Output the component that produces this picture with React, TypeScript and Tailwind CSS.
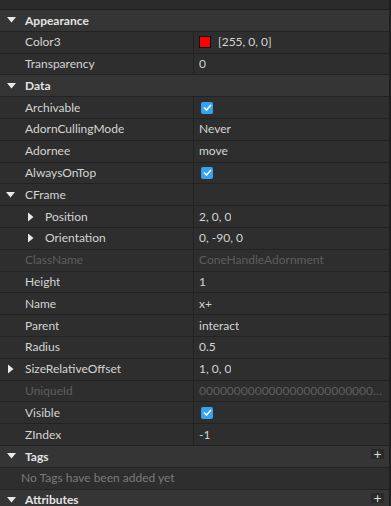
import React from 'react';

type Prop = {
  label: string;
  value?: string;
  kind?: 'text' | 'check' | 'color';
  dim?: boolean;
  indent?: boolean;
  expand?: 'open' | 'closed';
};

type Section = { title: string; props?: Prop[]; add?: boolean; empty?: string };

const sections: Section[] = [
  {
    title: 'Appearance',
    props: [
      { label: 'Color3', value: '[255, 0, 0]', kind: 'color' },
      { label: 'Transparency', value: '0' },
    ],
  },
  {
    title: 'Data',
    props: [
      { label: 'Archivable', kind: 'check' },
      { label: 'AdornCullingMode', value: 'Never' },
      { label: 'Adornee', value: 'move' },
      { label: 'AlwaysOnTop', kind: 'check' },
      { label: 'CFrame', value: '', expand: 'open' },
      { label: 'Position', value: '2, 0, 0', indent: true, expand: 'closed' },
      { label: 'Orientation', value: '0, -90, 0', indent: true, expand: 'closed' },
      { label: 'ClassName', value: 'ConeHandleAdornment', dim: true },
      { label: 'Height', value: '1' },
      { label: 'Name', value: 'x+' },
      { label: 'Parent', value: 'interact' },
      { label: 'Radius', value: '0.5' },
      { label: 'SizeRelativeOffset', value: '1, 0, 0', expand: 'closed' },
      { label: 'UniqueId', value: '0000000000000000000000000000000000000', dim: true },
      { label: 'Visible', kind: 'check' },
      { label: 'ZIndex', value: '-1' },
    ],
  },
  { title: 'Tags', add: true, empty: 'No Tags have been added yet' },
  { title: 'Attributes', add: true },
];

function Down() {
  return (
    <svg width="9" height="6" viewBox="0 0 9 6" className="shrink-0">
      <path d="M0 0 H9 L4.5 5.5 Z" fill="#e8e8e8" />
    </svg>
  );
}

function Right() {
  return (
    <svg width="6" height="9" viewBox="0 0 6 9" className="shrink-0">
      <path d="M0 0 V9 L5.5 4.5 Z" fill="#e8e8e8" />
    </svg>
  );
}

function Check() {
  return (
    <span className="ml-[2px] flex h-[12px] w-[12px] items-center justify-center rounded-[2px] bg-[#35a3f2]">
      <svg width="9" height="7" viewBox="0 0 9 7">
        <path d="M1 3.5 L3.5 6 L8 1" stroke="#fff" strokeWidth="1.6" fill="none" />
      </svg>
    </span>
  );
}

function Header({ title, add }: { title: string; add?: boolean }) {
  return (
    <div className="relative flex h-[21.8px] shrink-0 items-center border-b border-[#222222] bg-[#353535]">
      <span className="ml-[7px] mr-[9px]">
        <Down />
      </span>
      <span className="pt-[1px] font-bold text-[#e3e3e3]">{title}</span>
      {add ? (
        <span className="absolute right-[5px] top-[3px] flex h-[10px] w-[13px] items-center justify-center bg-[#2a2a2a] text-[14px] leading-none text-[#dddddd]">
          +
        </span>
      ) : null}
    </div>
  );
}

function Row({ p }: { p: Prop }) {
  const txt = p.dim ? 'text-[#5e5e5e]' : 'text-[#d4d4d4]';
  return (
    <div className="flex h-[21.8px] shrink-0 border-b border-[#222222] bg-[#2e2e2e]">
      <div className="relative flex w-[194px] shrink-0 items-center border-r border-[#222222]">
        {p.expand ? (
          <span className={'absolute top-1/2 -translate-y-1/2 ' + (p.indent ? 'left-[28px]' : p.expand === 'open' ? 'left-[6px]' : 'left-[8px]')}>
            {p.expand === 'open' ? <Down /> : <Right />}
          </span>
        ) : null}
        <span className={(p.indent ? 'pl-[45px] ' : 'pl-[25px] ') + 'truncate ' + txt}>{p.label}</span>
      </div>
      <div className="flex min-w-0 flex-1 items-center pl-[5px] pr-[6px]">
        {p.kind === 'check' ? (
          <Check />
        ) : p.kind === 'color' ? (
          <>
            <span className="mr-[7px] h-[12px] w-[12px] shrink-0 border border-black bg-[#ff0000]" />
            <span className={txt}>{p.value}</span>
          </>
        ) : (
          <span className={'truncate ' + txt}>{p.value}</span>
        )}
      </div>
    </div>
  );
}

export default function App() {
  return (
    <div
      className="flex h-[506px] w-[391px] overflow-hidden bg-[#2e2e2e] text-[12px]"
      style={{ fontFamily: 'Lato, "Open Sans", sans-serif' }}
    >
      <div className="flex min-w-0 flex-1 flex-col">
        <div className="h-[10px] shrink-0 border-b border-[#1f1f1f] bg-[#2b2b2b]" />
        {sections.map((s) => (
          <React.Fragment key={s.title}>
            <Header title={s.title} add={s.add} />
            {s.props?.map((p) => <Row key={p.label} p={p} />)}
            {s.empty ? (
              <div className="flex h-[21.8px] shrink-0 items-center border-b border-[#222222] bg-[#2e2e2e] pl-[21px] text-[#7a7a7a]">
                {s.empty}
              </div>
            ) : null}
          </React.Fragment>
        ))}
      </div>
      <div className="w-[2px] shrink-0 bg-[#1f1f1f]" />
    </div>
  );
}
